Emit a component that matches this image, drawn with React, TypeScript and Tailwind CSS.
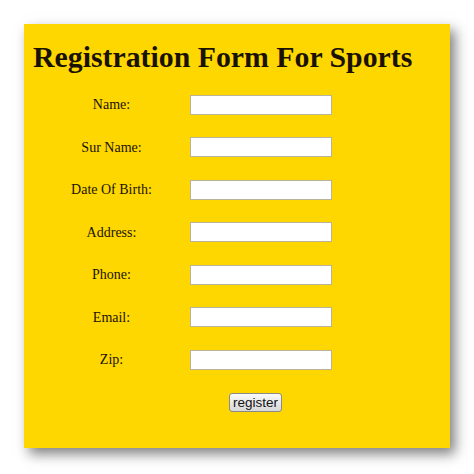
const fields = ["Name:", "Sur Name:", "Date Of Birth:", "Address:", "Phone:", "Email:", "Zip:"];

const App = () => {
  return (
    <div className="w-[474px] h-[474px] bg-white pt-[24px] pl-[24px]">
      <div className="w-[426px] h-[424px] bg-[#ffd700] shadow-[5px_6px_12px_rgba(0,0,0,0.5)] pt-[18px] pl-[9px] font-['Liberation_Serif',serif] text-[#1a1200]">
        <h1 className="text-[29.8px] font-bold leading-none">Registration Form For Sports</h1>
        <div className="mt-[23px] flex flex-col gap-[22.5px]">
          {fields.map((f) => (
            <div key={f} className="flex items-center h-[20px]">
              <div className="w-[157px] text-center text-[14px]">{f}</div>
              <input
                type="text"
                className="w-[142px] h-[20px] bg-white border border-[#b9b39a] outline-none"
              />
            </div>
          ))}
        </div>
        <div className="mt-[23px] flex justify-center pl-[28px]">
          <button className="h-[19px] w-[53px] text-[13.5px] leading-none font-['Liberation_Sans',sans-serif] text-[#111] border border-[#8a8a8a] rounded-[3px] bg-gradient-to-b from-[#fafafa] to-[#d8d8d8]">
            register
          </button>
        </div>
      </div>
    </div>
  );
};

export default App;
